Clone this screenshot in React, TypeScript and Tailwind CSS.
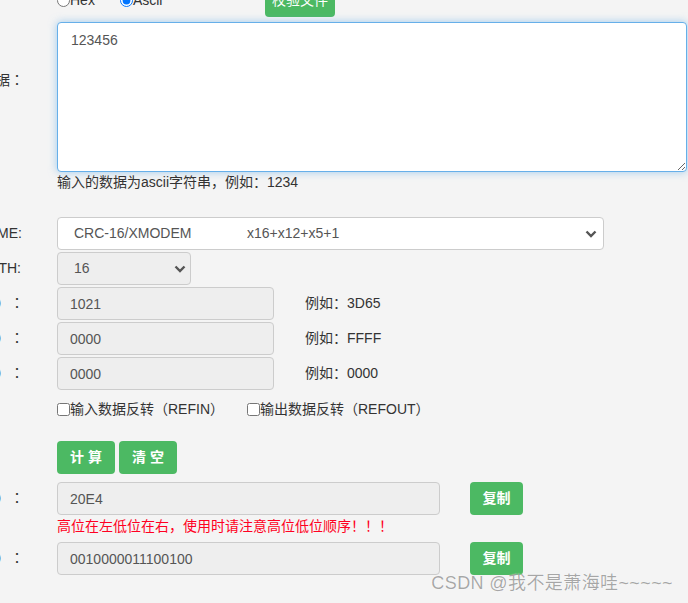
import React from 'react';

const green = 'bg-[#4cb963] hover:bg-[#45a95a]';

const Chevron: React.FC = () => (
  <svg width="12" height="8" viewBox="0 0 12 8" className="shrink-0">
    <polyline points="1.5,1.5 6,6 10.5,1.5" fill="none" stroke="#555" strokeWidth="2.4" />
  </svg>
);

interface RowProps {
  label?: string;
  labelClass?: string;
  className?: string;
  children: React.ReactNode;
}

// label column is wider than the visible gutter, only its tail shows at the left edge
const Row: React.FC<RowProps> = ({ label, labelClass = 'pr-[33px] leading-[33px]', className = '', children }) => (
  <div className={`flex ${className}`}>
    <label
      className={`w-[300px] shrink-0 whitespace-nowrap text-right font-['Liberation_Sans','Noto_Sans_CJK_TC',sans-serif] [text-spacing-trim:space-all] ${labelClass}`}
    >
      {label}
    </label>
    <div className="flex items-start">{children}</div>
  </div>
);

const ReadInput: React.FC<{ value: string; width: string }> = ({ value, width }) => (
  <input
    type="text"
    readOnly
    value={value}
    className={`${width} h-[33px] rounded-[4px] border border-[#ccc] bg-[#eee] pl-[12px] text-[14px] text-[#555] outline-none`}
  />
);

const App: React.FC = () => {
  const params = [
    { label: '多项式POLY（Hex）：', value: '1021', example: '3D65' },
    { label: '初始值INIT（Hex）：', value: '0000', example: 'FFFF' },
    { label: '结果异或值XOROUT（Hex）：', value: '0000', example: '0000' },
  ];

  return (
    <div className="relative h-[603px] w-[688px] overflow-hidden bg-[#f4f4f4] font-['Liberation_Sans','Noto_Sans_CJK_SC',sans-serif] text-[14px] text-[#333]">
      <div className="-ml-[243px] -mt-[16px]">
        <Row labelClass="">
          <div className="flex w-[208px] gap-[25px] pt-[6px] leading-[20px]">
            <label className="flex items-center">
              <input type="radio" name="fmt" className="m-0 h-[13px] w-[13px]" />
              <span>Hex</span>
            </label>
            <label className="flex items-center">
              <input type="radio" name="fmt" defaultChecked className="m-0 h-[13px] w-[13px]" />
              <span>Ascii</span>
            </label>
          </div>
          <button className={`${green} h-[33px] w-[70px] rounded-[4px] text-white`}>校验文件</button>
        </Row>

        <Row label="输入数据：" labelClass="pr-[33px] pt-[48px] leading-[20px]" className="mt-[5px]">
          <textarea
            defaultValue="123456"
            className="h-[150px] w-[630px] rounded-[4px] border border-[#66afe9] bg-white pl-[13px] pt-[7px] text-[14px] leading-[20px] text-[#555] shadow-[0_0_8px_rgba(102,175,233,0.6)] outline-none"
          />
        </Row>

        <Row labelClass="">
          <p className="leading-[20px]">输入的数据为ascii字符串，例如：1234</p>
        </Row>

        <Row label="参数模型 NAME:" labelClass="pr-[35px] leading-[33px]" className="mt-[25px]">
          <div className="flex h-[33px] w-[547px] items-center rounded-[4px] border border-[#ccc] bg-white pl-[16px] pr-[6px] text-[#555]">
            <span className="w-[173px]">CRC-16/XMODEM</span>
            <span className="flex-1">x16+x12+x5+1</span>
            <Chevron />
          </div>
        </Row>

        <Row label="宽度 WIDTH:" labelClass="pr-[36px] leading-[33px]" className="mt-[2px]">
          <div className="flex h-[33px] w-[134px] items-center rounded-[4px] border border-[#ccc] bg-[#eee] pl-[16px] pr-[4px] text-[#555]">
            <span className="flex-1">16</span>
            <Chevron />
          </div>
        </Row>

        {params.map((p) => (
          <Row key={p.label} label={p.label} className="mt-[2px]">
            <ReadInput value={p.value} width="w-[217px]" />
            <span className="ml-[31px] leading-[33px]">例如：{p.example}</span>
          </Row>
        ))}

        <Row labelClass="" className="mt-[9px]">
          <label className="flex w-[190px] items-center leading-[20px]">
            <input type="checkbox" className="m-0 h-[13px] w-[13px]" />
            <span>输入数据反转（REFIN）</span>
          </label>
          <label className="flex items-center leading-[20px]">
            <input type="checkbox" className="m-0 h-[13px] w-[13px]" />
            <span>输出数据反转（REFOUT）</span>
          </label>
        </Row>

        <Row labelClass="" className="mt-[22px]">
          <div className="flex gap-[4px]">
            <button className={`${green} h-[33px] w-[58px] rounded-[4px] pl-[4px] font-bold tracking-[4px] text-white`}>计算</button>
            <button className={`${green} h-[33px] w-[58px] rounded-[4px] pl-[4px] font-bold tracking-[4px] text-white`}>清空</button>
          </div>
        </Row>

        <Row label="校验计算结果（Hex）：" className="mt-[8px]">
          <ReadInput value="20E4" width="w-[383px]" />
          <button className={`${green} ml-[30px] h-[33px] w-[53px] rounded-[4px] font-bold text-white`}>复制</button>
        </Row>

        <Row labelClass="" className="mt-[1px]">
          <p className="leading-[20px] text-[#ff0022]">高位在左低位在右，使用时请注意高位低位顺序！！！</p>
        </Row>

        <Row label="校验计算结果（Bin）：" className="mt-[6px]">
          <ReadInput value="0010000011100100" width="w-[383px]" />
          <button className={`${green} ml-[30px] h-[33px] w-[53px] rounded-[4px] font-bold text-white`}>复制</button>
        </Row>
      </div>

      <div className="absolute bottom-[9px] right-[15px] text-[18px] leading-[22px] tracking-[0.4px] text-[rgba(0,0,0,0.35)] [text-shadow:0_0_1px_#fff]">
        CSDN @我不是萧海哇~~~~~
      </div>
    </div>
  );
};

export default App;
